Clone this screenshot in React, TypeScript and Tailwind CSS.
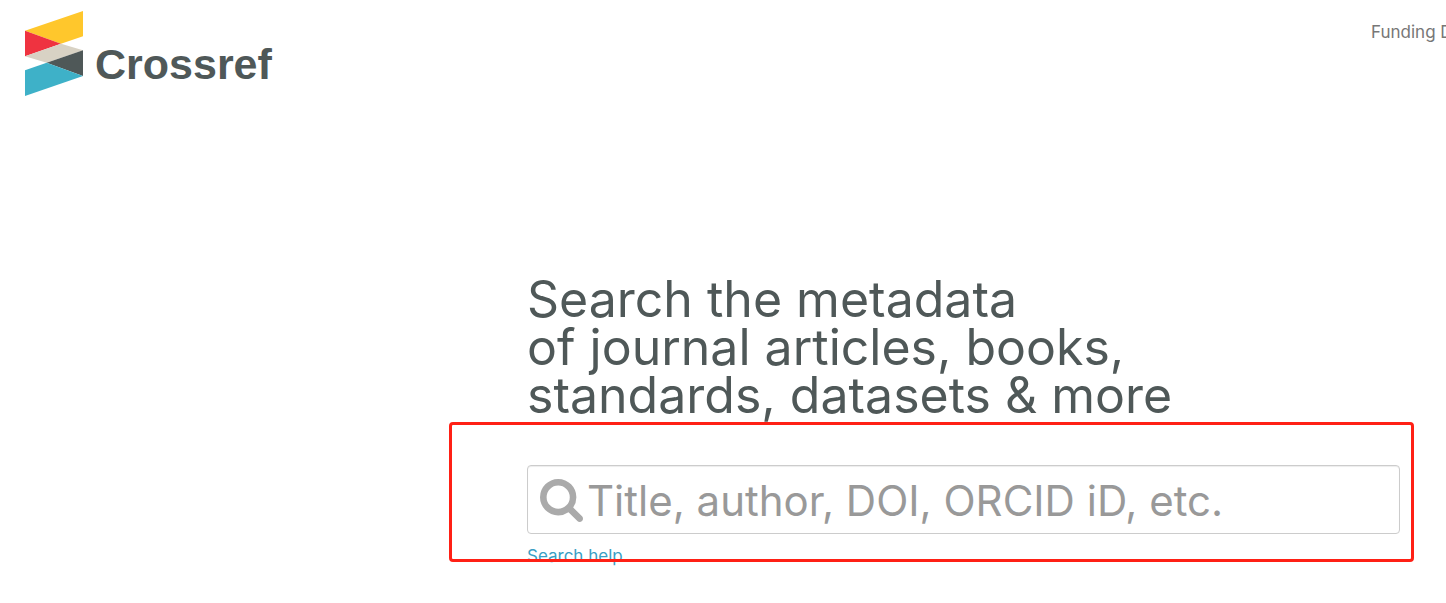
function LogoMark() {
  return (
    <svg className="h-[85px] w-[58px] shrink-0" viewBox="0 0 174 255" aria-hidden="true">
      <polygon points="0,59 174,0 174,76 108,98" fill="#ffc72c" />
      <polygon points="0,59 108,98 0,136" fill="#ef3340" />
      <polygon points="0,136 108,98 174,118 65,155" fill="#d8d2c4" />
      <polygon points="65,155 174,118 174,195" fill="#4f5858" />
      <polygon points="0,178 65,155 174,195 0,255" fill="#3eb1c8" />
    </svg>
  );
}

function SearchIcon() {
  return (
    <svg className="size-[43px] shrink-0" viewBox="0 128 1664 1664" fill="#aaaaaa" aria-hidden="true">
      <path d="M1152 832q0-185-131.5-316.5t-316.5-131.5-316.5 131.5-131.5 316.5 131.5 316.5 316.5 131.5 316.5-131.5 131.5-316.5zm512 832q0 52-38 90t-90 38q-54 0-90-38l-343-342q-179 124-399 124-143 0-273.5-55.5t-225-150-150-225-55.5-273.5 55.5-273.5 150-225 225-150 273.5-55.5 273.5 55.5 225 150 150 225 55.5 273.5q0 220-124 399l343 343q37 37 37 90z" />
    </svg>
  );
}

export default function App() {
  return (
    <div className="min-h-screen w-full overflow-hidden bg-white font-['Inter','Liberation_Sans',sans-serif]">
      <header className="flex items-start justify-between pt-[11px] pl-[25px]">
        <a href="#" className="flex items-center gap-3">
          <LogoMark />
          <span className="pt-5 font-['Liberation_Sans',sans-serif] text-[43px] leading-[48px] font-bold text-[#4f5858]">
            Crossref
          </span>
        </a>
        {/* Menu runs on past the right edge */}
        <nav className="w-[75px] overflow-hidden pt-[9px] text-[17px] leading-6 whitespace-nowrap">
          <a href="#" className="text-[#777777]">Funding Data</a>
        </nav>
      </header>

      <main className="pt-[179px] pr-[46px] pl-[527px]">
        <h1 className="text-[50px] leading-[48px] font-normal whitespace-nowrap text-[#4f5858]">
          Search the metadata
          <br />
          of journal articles, books,
          <br />
          standards, datasets &amp; more
        </h1>

        <form className="relative mt-[46px]" onSubmit={(e) => e.preventDefault()}>
          <label className="flex h-[69px] items-center gap-1 rounded border border-[#cccccc] px-3 pt-[2px] shadow-[inset_0_1px_1px_rgba(0,0,0,0.075)]">
            <SearchIcon />
            <input
              type="text"
              aria-label="Search"
              placeholder="Title, author, DOI, ORCID iD, etc."
              className="h-[60px] min-w-0 flex-1 bg-transparent text-[42px] text-[#555555] outline-none placeholder:text-[#999999]"
            />
          </label>
          <div className="pt-[10px] text-[17px] leading-6">
            <a href="#" className="text-[#3a9fc4]">Search help</a>
          </div>
          {/* Highlight frame */}
          <div className="pointer-events-none absolute -top-[43px] -right-[14px] -left-[78px] h-[140px] rounded border-[3px] border-[#ff2015]" />
        </form>
      </main>
    </div>
  );
}
